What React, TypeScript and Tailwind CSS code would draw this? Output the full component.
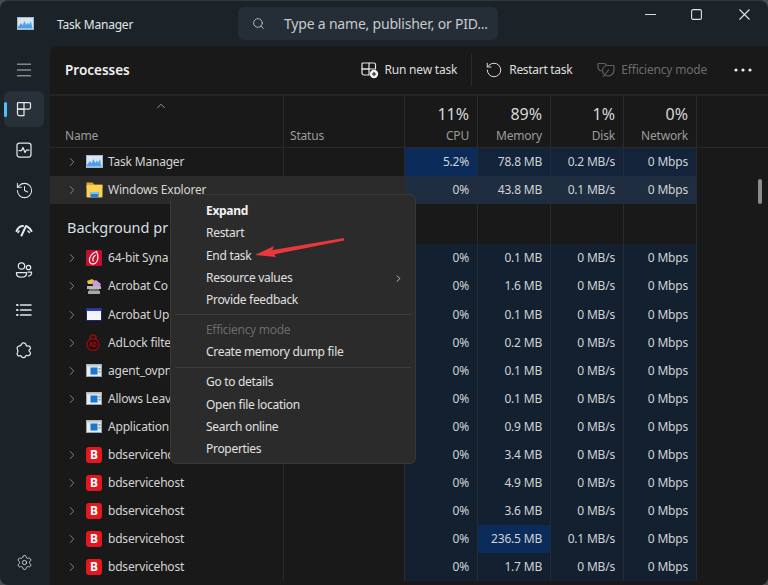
import React from "react";
import { Search, ChevronRight, ChevronUp, Menu, History, Settings, RotateCcw } from "lucide-react";

const TmIcon = () => (
  <svg width="17" height="13" viewBox="0 0 17 13" className="shrink-0">
    <rect x="0.5" y="0.5" width="16" height="12" fill="#d6e6f5" stroke="#a6b8c8" strokeWidth="1" />
    <path d="M1 10 L4 6 L5.5 8.5 L7.5 4 L9 8 L11 5.5 L12 8 L14 4 L15 10 L16 11.5 L1 11.5Z" fill="#4f9fe8" />
  </svg>
);
const FolderIcon = () => (
  <svg width="17" height="16" viewBox="0 0 17 16" className="shrink-0">
    <path d="M0.5 0.5 h6 l2 2 h8 v3 h-16z" fill="#e0a526" />
    <rect x="0.5" y="3" width="16" height="12.5" rx="1" fill="#fbd156" />
    <rect x="4.5" y="10" width="8" height="5.5" fill="#2a7fd0" />
    <rect x="4.5" y="10" width="8" height="2" fill="#7cc4f2" />
  </svg>
);
const SynaIcon = () => (
  <svg width="16" height="16" viewBox="0 0 16 16" className="shrink-0">
    <rect width="16" height="16" rx="1.5" fill="#c4102f" />
    <path d="M10.5 1.5 C6 3 3 7 3.5 11 C4 14.5 8.5 15 10.5 12 C12.5 9 12 5 10.5 1.5Z M9.5 5 C7 7 6 9 7.5 11.5" fill="none" stroke="#f6e3e6" strokeWidth="1.3" />
  </svg>
);
const AcroColl = () => (
  <svg width="16" height="17" viewBox="0 0 16 17" className="shrink-0">
    <path d="M1 3 L6 1 L9 3 L6 6 H2Z" fill="#e9c22c" />
    <path d="M6 4 L10 2 L15 6 L14 8 H7Z" fill="#c79be0" />
    <rect x="1" y="8" width="14" height="3" fill="#b9b9b9" />
    <rect x="3" y="11" width="10" height="2" fill="#6e6e6e" />
    <rect x="2" y="13" width="12" height="3" fill="#a8a8a8" />
  </svg>
);
const AcroUp = () => (
  <svg width="16" height="13" viewBox="0 0 16 13" className="shrink-0">
    <rect x="0.5" y="0.5" width="15" height="12" fill="#f4f5fa" stroke="#23237c" />
    <rect x="0.5" y="0.5" width="15" height="2.5" fill="#2d3fb0" />
  </svg>
);
const AdLockIcon = () => (
  <svg width="14" height="17" viewBox="0 0 14 17" className="shrink-0">
    <path d="M4 6 V4 a3 3 0 0 1 6 0 V6" fill="none" stroke="#8f0d10" strokeWidth="1.5" />
    <circle cx="7" cy="10.5" r="6" fill="#2a0a0a" stroke="#8f0d10" strokeWidth="1.4" />
    <path d="M3.5 13 L5 8 L6.5 13 M8 8 V13 C11 13 11 8 8 8" fill="none" stroke="#a11216" strokeWidth="1" />
  </svg>
);
const AppIcon = () => (
  <svg width="16" height="13" viewBox="0 0 16 13" className="shrink-0">
    <rect x="0.5" y="0.5" width="15" height="12" fill="#e8ecef" stroke="#9aa5ad" />
    <rect x="0.5" y="0.5" width="15" height="2" fill="#c3ccd2" />
    <rect x="4.5" y="3.5" width="7" height="7" fill="#1478d4" />
    <rect x="12.5" y="4" width="2" height="1.5" fill="#8a949b" />
    <rect x="12.5" y="7" width="2" height="1.5" fill="#8a949b" />
  </svg>
);
const BdIcon = () => (
  <span className="w-4 h-4 shrink-0 rounded-[3px] bg-[#e3181f] text-white flex items-center justify-center text-[12px] font-bold leading-none">B</span>
);

const Stroke = ({ children, size = 20, color = "#e4e6e8" }: { children: React.ReactNode; size?: number; color?: string }) => (
  <svg width={size} height={size} viewBox="0 0 20 20" fill="none" stroke={color} strokeWidth="1.25" strokeLinecap="round" strokeLinejoin="round">
    {children}
  </svg>
);

const ProcIcon = () => (
  <Stroke>
    <path d="M4 3.5 h6 v6.5 h-6.5 v-6 a.5 .5 0 0 1 .5 -.5Z" />
    <path d="M10 3.5 h5.5 a1 1 0 0 1 1 1 v4 a1.5 1.5 0 0 1 -1.5 1.5 h-5" />
    <path d="M3.5 10 h6.5 v6.5 h-5 a1.5 1.5 0 0 1 -1.5 -1.5Z" />
  </Stroke>
);
const PerfIcon = () => (
  <Stroke>
    <rect x="3" y="3" width="14" height="14" rx="2.5" />
    <path d="M5 10.5 h2.5 l1.5 -3 l2 5 l1.5 -2.5 h2.5" />
  </Stroke>
);
const StartupIcon = () => (
  <Stroke>
    <path d="M2.5 11 C4 7.5 6.5 6 9 6" strokeWidth="2" />
    <path d="M13 6.5 C15 7.3 16.5 9 17.5 11" strokeWidth="2" />
    <path d="M12 6 L7.5 15.5" strokeWidth="2" />
    <path d="M14 11 L15.5 12.5" strokeWidth="1.6" />
    <path d="M5 11 L4 12.5" strokeWidth="1.6" />
  </Stroke>
);
const UsersIcon = () => (
  <Stroke>
    <circle cx="7.5" cy="6" r="3.2" />
    <circle cx="14.5" cy="7.5" r="2.2" />
    <path d="M2.5 12.5 h10 v1.5 a3.5 3.5 0 0 1 -3.5 3 h-3 a3.5 3.5 0 0 1 -3.5 -3Z" />
    <path d="M14 12 h3.5 v1.5 a3 3 0 0 1 -3 2.5" />
  </Stroke>
);
const DetailsIcon = () => (
  <Stroke>
    <path d="M6.5 5 H17 M6.5 10 H17 M6.5 15 H17" strokeWidth="1.5" />
    <path d="M3 5 h.6 M3 10 h.6 M3 15 h.6" strokeWidth="2" />
  </Stroke>
);
const ServicesIcon = () => (
  <Stroke>
    <path d="M8 3.5 C8.5 2.5 11.5 2.5 12 4.5 C12.3 5.5 12 6 12.5 6 C14 5.5 16.5 6 16.5 8 C16.5 9.5 15 9.5 15 10.5 C15 11.5 16.5 12 16.5 13.5 C16.5 15.5 14 16 13 15.5 C12 15 11.5 16 11.5 16.5 C11 18 8 18 7.5 16.5 C7 15.5 6 15.5 5 16 C3.5 16 2.5 14 3.5 12.5 C4 11.5 4 10.5 3.5 9.5 C2.5 8 3.5 6 5 6 C6.5 6 7.5 5 8 3.5Z" />
  </Stroke>
);
const RunIcon = () => (
  <svg width="18" height="18" viewBox="0 0 18 18" fill="none" stroke="#e6e6e6" strokeWidth="1.2">
    <path d="M2 2 h6 v6 h-7 v-5 a1 1 0 0 1 1 -1Z" />
    <path d="M8 2 h5 a1.5 1.5 0 0 1 1.5 1.5 v4.5 h-6.5" />
    <path d="M1 8 h7 v6 h-5 a2 2 0 0 1 -2 -2Z" />
    <circle cx="13" cy="13" r="4.2" fill="#f0f0f0" stroke="none" />
    <path d="M13 11 v4 M11 13 h4" stroke="#191919" strokeWidth="1.1" />
  </svg>
);
const LeafIcon = () => (
  <svg width="18" height="16" viewBox="0 0 18 16" fill="none" stroke="#5f5f5f" strokeWidth="1.2" strokeLinejoin="round">
    <path d="M1 1.5 h6 a4 4 0 0 1 3 2 M1 1.5 v3 a4.5 4.5 0 0 0 3.5 4.5" />
    <path d="M17 3.5 h-7 a5 5 0 0 0 -4.5 5 a5.5 5.5 0 0 0 5.5 5.5 a6 6 0 0 0 6 -6Z" />
    <path d="M6 15 L12 7.5" />
  </svg>
);

type RowData = { name: string; icon: React.ReactNode; chevron?: boolean; v: string[]; hover?: boolean; hot?: number };
const rows: RowData[] = [
  { name: "Task Manager", icon: <TmIcon />, chevron: true, v: ["5.2%", "78.8 MB", "0.2 MB/s", "0 Mbps"], hot: 0 },
  { name: "Windows Explorer", icon: <FolderIcon />, chevron: true, v: ["0%", "43.8 MB", "0.1 MB/s", "0 Mbps"], hover: true },
];
const bg: RowData[] = [
  { name: "64-bit Syna", icon: <SynaIcon />, chevron: true, v: ["0%", "0.1 MB", "0 MB/s", "0 Mbps"] },
  { name: "Acrobat Co", icon: <AcroColl />, chevron: true, v: ["0%", "1.6 MB", "0 MB/s", "0 Mbps"] },
  { name: "Acrobat Up", icon: <AcroUp />, chevron: true, v: ["0%", "0.1 MB", "0 MB/s", "0 Mbps"] },
  { name: "AdLock filte", icon: <AdLockIcon />, chevron: true, v: ["0%", "0.2 MB", "0 MB/s", "0 Mbps"] },
  { name: "agent_ovpn", icon: <AppIcon />, chevron: true, v: ["0%", "0.1 MB", "0 MB/s", "0 Mbps"] },
  { name: "Allows Leav", icon: <AppIcon />, chevron: true, v: ["0%", "0.1 MB", "0 MB/s", "0 Mbps"] },
  { name: "Application", icon: <AppIcon />, v: ["0%", "0.9 MB", "0 MB/s", "0 Mbps"] },
  { name: "bdserviceho", icon: <BdIcon />, chevron: true, v: ["0%", "3.4 MB", "0 MB/s", "0 Mbps"] },
  { name: "bdservicehost", icon: <BdIcon />, chevron: true, v: ["0%", "4.9 MB", "0 MB/s", "0 Mbps"] },
  { name: "bdservicehost", icon: <BdIcon />, chevron: true, v: ["0%", "3.6 MB", "0 MB/s", "0 Mbps"] },
  { name: "bdservicehost", icon: <BdIcon />, chevron: true, v: ["0%", "236.5 MB", "0.1 MB/s", "0 Mbps"], hot: 1 },
  { name: "bdservicehost", icon: <BdIcon />, chevron: true, v: ["0%", "1.7 MB", "0 MB/s", "0 Mbps"] },
];

const GRID = "grid grid-cols-[234px_121px_73px_73px_73px_73px_1fr]";

function Row({ r, first }: { r: RowData; first?: boolean }) {
  return (
    <div className={`${GRID} h-[28.1px] shrink-0`}>
      <div className={`flex items-center border-r border-[#2a2a2a] ${r.hover ? "bg-[#2a2a2a]" : ""}`}>
        <div className="w-[36px] shrink-0 flex justify-end pr-[2px]">
          {r.chevron && <ChevronRight size={14} color="#8c8c8c" strokeWidth={1.6} className="mr-[5px]" />}
        </div>
        <div className="w-[22px] shrink-0 flex items-center">{r.icon}</div>
        <span className="text-[12px] tracking-[-0.2px] text-[#d4d4d4] whitespace-nowrap">{r.name}</span>
      </div>
      <div className={`border-r border-[#2a2a2a] ${r.hover ? "bg-[#2a2a2a]" : ""}`} />
      {r.v.map((c, i) => {
        const hot = r.hot === i;
        const base = r.hover ? "bg-[#1f2d40]" : first ? "bg-[#12233a]" : "bg-[#13202f]";
        return (
          <div
            key={i}
            className={`flex items-center justify-end pr-[8px] text-[12px] tracking-[-0.2px] text-[#d0d3d6] border-r border-[#222b36] ${hot ? "bg-[#0b2c5a]" : base}`}
          >
            {c}
          </div>
        );
      })}
      <div />
    </div>
  );
}

const NavBtn = ({ children, active, cls = "" }: { children: React.ReactNode; active?: boolean; cls?: string }) => (
  <div className={`relative w-10 h-[36px] rounded-md flex items-center justify-center ${active ? "bg-[#28313a]" : ""} ${cls}`}>
    {active && <span className="absolute left-0 top-[11px] w-[3px] h-[15px] rounded-full bg-[#4cc2ff]" />}
    {children}
  </div>
);

const MenuItem = ({ children, bold, disabled, arrow }: { children: React.ReactNode; bold?: boolean; disabled?: boolean; arrow?: boolean }) => (
  <div className={`h-[22.3px] flex items-center justify-between pl-[35px] pr-[11px] text-[12px] tracking-[-0.3px] ${bold ? "font-bold text-[#f2f2f2]" : disabled ? "text-[#6a6a6a]" : "text-[#e0e0e0]"}`}>
    <span>{children}</span>
    {arrow && <ChevronRight size={11} color="#d0d0d0" strokeWidth={2} />}
  </div>
);

const Hdr = ({ pct, label }: { pct: string; label: string }) => (
  <div className="flex flex-col items-end pr-[8px] pt-[8px] border-r border-[#2a2a2a]">
    <span className="text-[16px] leading-[21px] text-[#d8d8d8]">{pct}</span>
    <span className="text-[12px] tracking-[-0.2px] leading-[17px] mt-[2px] text-[#9c9c9c]">{label}</span>
  </div>
);

export default function App() {
  return (
    <div className="relative w-[768px] h-[585px] overflow-hidden bg-[#4a4d50] font-['Noto_Sans','Open_Sans',sans-serif]">
      <div className="w-full h-full rounded-[8px] overflow-hidden bg-[#1b2329] flex flex-col border-t border-[#33383c]">
        <div className="h-[45px] shrink-0 flex items-center relative">
          <div className="w-[57px] pl-[17px] shrink-0"><TmIcon /></div>
          <span className="w-[181px] shrink-0 pt-[2px] text-[12px] tracking-[-0.2px] text-[#e4e6e8]">Task Manager</span>
          <div className="w-[260px] h-[33px] rounded-md bg-[#252e36] flex items-center pl-[14px]">
            <Search size={13} color="#c4c8cc" strokeWidth={1.6} />
            <span className="ml-[19px] text-[14px] whitespace-nowrap tracking-[-0.2px] text-[#c6cacd]">Type a name, publisher, or PID...</span>
          </div>
          <div className="ml-auto flex items-center pr-[18px] -mt-[18px]">
            <svg width="11" height="11" viewBox="0 0 11 11" stroke="#d8dadc" strokeWidth="1.1"><path d="M0 5.5 H11" /></svg>
            <svg width="11" height="11" viewBox="0 0 11 11" fill="none" stroke="#e2e4e6" strokeWidth="1.1" className="ml-[35px]"><rect x="0.6" y="0.6" width="9.8" height="9.8" rx="1.5" /></svg>
            <svg width="11" height="11" viewBox="0 0 11 11" stroke="#e2e4e6" strokeWidth="1.1" className="ml-[37px]"><path d="M0.5 0.5 L10.5 10.5 M10.5 0.5 L0.5 10.5" /></svg>
          </div>
        </div>
        <div className="flex-1 flex min-h-0">
          <div className="w-[50px] shrink-0 flex flex-col items-center pr-[2px]">
            <div className="h-[45px] pt-[3px] flex items-center justify-center"><Menu size={20} color="#c8cacc" strokeWidth={1.1} /></div>
            <NavBtn active><ProcIcon /></NavBtn>
            <NavBtn cls="mt-[5px]"><PerfIcon /></NavBtn>
            <NavBtn cls="mt-[4px]"><History size={19} color="#e4e6e8" strokeWidth={1.3} /></NavBtn>
            <NavBtn cls="mt-[4px]"><StartupIcon /></NavBtn>
            <NavBtn cls="mt-[4px]"><UsersIcon /></NavBtn>
            <NavBtn cls="mt-[4px]"><DetailsIcon /></NavBtn>
            <NavBtn cls="mt-[4px]"><ServicesIcon /></NavBtn>
            <NavBtn cls="mt-auto mb-[5px]"><Settings size={17} color="#d8dadc" strokeWidth={1.25} /></NavBtn>
          </div>
          <div className="flex-1 min-w-0 bg-[#191919] rounded-tl-[8px] flex flex-col">
            <div className="h-[50px] shrink-0 flex items-center border-b-2 border-[#252525] pl-[15px] pr-[16px]">
              <span className="pt-[1px] text-[13.5px] font-semibold text-[#f0f0f0]">Processes</span>
              <div className="ml-auto flex items-center">
                <RunIcon />
                <span className="ml-[5px] text-[12px] tracking-[-0.2px] text-[#dedede]">Run new task</span>
                <div className="ml-[14px] w-px h-[32px] bg-[#2a2a2a]" />
                <RotateCcw size={18} color="#e6e6e6" strokeWidth={1.25} className="ml-[13px]" />
                <span className="ml-[6px] text-[12px] tracking-[-0.3px] text-[#dedede]">Restart task</span>
                <div className="ml-[25px]"><LeafIcon /></div>
                <span className="ml-[6px] text-[12px] tracking-[-0.2px] text-[#6b6b6b]">Efficiency mode</span>
                <svg width="18" height="4" viewBox="0 0 18 4" fill="#eeeeee" className="ml-[27px]">
                  <circle cx="2" cy="2" r="1.6" /><circle cx="9" cy="2" r="1.6" /><circle cx="16" cy="2" r="1.6" />
                </svg>
              </div>
            </div>
            <div className={`${GRID} h-[51.5px] shrink-0 border-b border-[#2a2a2a]`}>
              <div className="relative border-r border-[#2a2a2a] flex items-end pl-[15px] pb-[2px]">
                <ChevronUp size={14} color="#9c9c9c" strokeWidth={1.6} className="absolute left-[104px] top-[3px]" />
                <span className="text-[12px] tracking-[-0.2px] text-[#9c9c9c]">Name</span>
              </div>
              <div className="border-r border-[#2a2a2a] flex items-end pl-[6px] pb-[2px]">
                <span className="text-[12px] tracking-[-0.2px] text-[#9c9c9c]">Status</span>
              </div>
              <Hdr pct="11%" label="CPU" />
              <Hdr pct="89%" label="Memory" />
              <Hdr pct="1%" label="Disk" />
              <Hdr pct="0%" label="Network" />
              <div />
            </div>
            <div className="flex-1 min-h-0 overflow-hidden flex flex-col">
              {rows.map((r, i) => <Row key={i} r={r} first={i === 0} />)}
              <div className={`${GRID} h-[40.6px] shrink-0`}>
                <div className="border-r border-[#2a2a2a] flex items-center pl-[17px] pt-[7px]">
                  <span className="text-[14.5px] text-[#d8dde2] whitespace-nowrap">Background pr</span>
                </div>
                <div className="border-r border-[#2a2a2a]" />
                <div className="border-r border-[#2a2a2a]" />
                <div className="border-r border-[#2a2a2a]" />
                <div className="border-r border-[#2a2a2a]" />
                <div className="border-r border-[#2a2a2a]" />
                <div />
              </div>
              {bg.map((r, i) => <Row key={i} r={r} />)}
            </div>
          </div>
        </div>
      </div>

      <div className="absolute left-[758px] top-[179px] w-[4px] h-[25px] rounded-sm bg-[#8c8c8c]" />

      <div className="absolute left-[170px] top-[194px] w-[246px] h-[270px] rounded-[6px] bg-[#2b2b2b] border border-[#383838] py-[5px]">
        <MenuItem bold>Expand</MenuItem>
        <MenuItem>Restart</MenuItem>
        <MenuItem>End task</MenuItem>
        <MenuItem arrow>Resource values</MenuItem>
        <MenuItem>Provide feedback</MenuItem>
        <div className="mx-[4px] my-[3px] h-px bg-[#3d3d3d]" />
        <MenuItem disabled>Efficiency mode</MenuItem>
        <MenuItem>Create memory dump file</MenuItem>
        <div className="mx-[4px] my-[3.5px] h-px bg-[#3d3d3d]" />
        <MenuItem>Go to details</MenuItem>
        <MenuItem>Open file location</MenuItem>
        <MenuItem>Search online</MenuItem>
        <MenuItem>Properties</MenuItem>
      </div>

      <svg className="absolute left-[250px] top-[232px]" width="100" height="30" viewBox="0 0 100 30">
        <path d="M94 6 L20 18.5 L21 23 L94 8.5Z" fill="#e8383c" />
        <path d="M5 23 L24 14 L22 19 L26 25Z" fill="#e8383c" />
      </svg>
    </div>
  );
}
